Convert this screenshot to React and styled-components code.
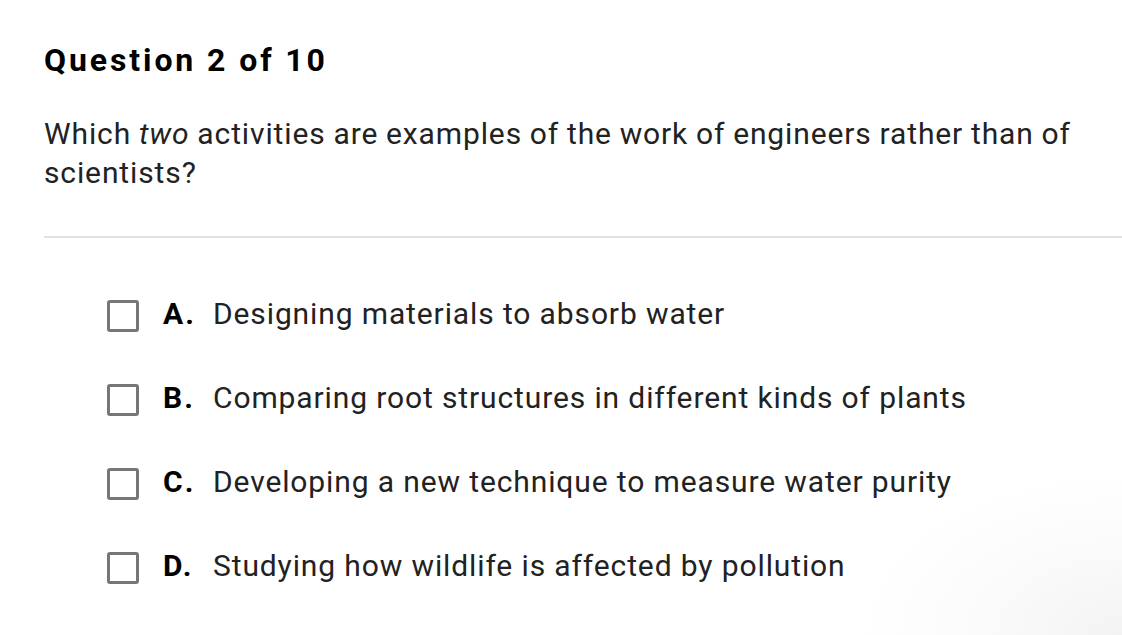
import React from "react";
import styled, { createGlobalStyle } from "styled-components";

const Global = createGlobalStyle`
  html, body { margin: 0; padding: 0; background: #fff; }
  body { font-family: Roboto, "Liberation Sans", sans-serif; width: 1122px; height: 635px; overflow: hidden; }
`;

const Page = styled.div`
  width: 1122px;
  height: 635px;
  box-sizing: border-box;
  padding: 40px 0 0 44px;
  background: radial-gradient(ellipse 260px 160px at 1122px 635px, #f3f3f3 0%, #fafafa 50%, #ffffff 100%);
`;

const Title = styled.h1`
  margin: 0;
  font-size: 32px;
  line-height: 40px;
  font-weight: 700;
  letter-spacing: 2.9px;
  color: #000;
`;

const Prompt = styled.p`
  margin: 34px 0 0;
  font-size: 30px;
  line-height: 39px;
  letter-spacing: 0.88px;
  word-spacing: -0.5px;
  color: #222;
  max-width: 1060px;
`;

const Emph = styled.em`
  font-style: italic;
`;

const Divider = styled.hr`
  margin: 44px 0 0;
  border: none;
  height: 2px;
  background: #e2e2e2;
`;

const Options = styled.div`
  display: flex;
  flex-direction: column;
  gap: 43px;
  padding: 57px 0 0 63px;
`;

const Option = styled.label`
  display: flex;
  align-items: center;
  height: 41px;
  cursor: pointer;
`;

const Box = styled.span`
  box-sizing: border-box;
  width: 32px;
  height: 32px;
  border: 3px solid #767676;
  border-radius: 3px;
  flex: none;
`;

const Letter = styled.span`
  margin-left: 24px;
  width: 50px;
  margin-top: -4px;
  font-size: 30px;
  font-weight: 700;
  letter-spacing: 2px;
  color: #000;
`;

const Text = styled.span`
  margin-top: -4px;
  font-size: 30px;
  letter-spacing: 0.88px;
  color: #222;
`;

const options = [
  ["A.", "Designing materials to absorb water"],
  ["B.", "Comparing root structures in different kinds of plants"],
  ["C.", "Developing a new technique to measure water purity"],
  ["D.", "Studying how wildlife is affected by pollution"],
];

export default function App() {
  return (
    <>
      <Global />
      <Page>
        <Title>Question 2 of 10</Title>
        <Prompt>
          Which <Emph>two</Emph> activities are examples of the work of engineers rather than of scientists?
        </Prompt>
        <Divider />
        <Options>
          {options.map(([l, t]) => (
            <Option key={l}>
              <Box />
              <Letter>{l}</Letter>
              <Text>{t}</Text>
            </Option>
          ))}
        </Options>
      </Page>
    </>
  );
}
